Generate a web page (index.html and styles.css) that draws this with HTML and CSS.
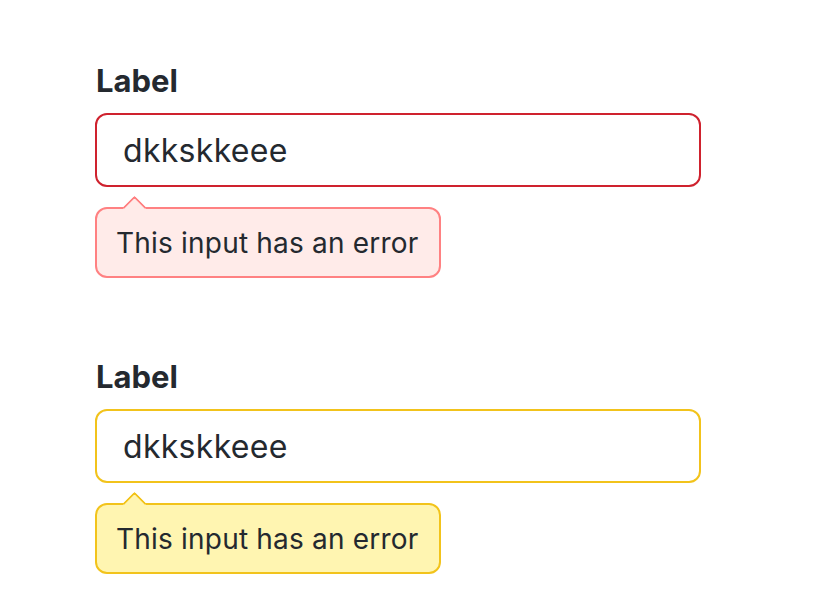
FILE: index.html
```html
<!DOCTYPE html>
<html>
<head>
<meta charset="utf-8">
<link rel="stylesheet" href="styles.css">
</head>
<body>
<div class="page">
  <div class="field field-error">
    <label class="label">Label</label>
    <input class="input" type="text" value="dkkskkeee">
    <div class="validation">This input has an error</div>
  </div>
  <div class="field field-warning">
    <label class="label">Label</label>
    <input class="input" type="text" value="dkkskkeee">
    <div class="validation">This input has an error</div>
  </div>
</div>
</body>
</html>
```
FILE: styles.css
```css
html, body {
  margin: 0;
  padding: 0;
  background: #ffffff;
}
body {
  font-family: Inter, "Noto Sans", "Liberation Sans", sans-serif;
  color: #24292f;
}
.page {
  padding: 61px 0 0 95px;
  display: flex;
  flex-direction: column;
  gap: 79px;
}
.field {
  display: flex;
  flex-direction: column;
  align-items: flex-start;
}
.label {
  font-size: 31px;
  font-weight: 700;
  line-height: 40px;
  height: 40px;
  margin-bottom: 12px;
  padding-left: 1px;
}
.input {
  box-sizing: border-box;
  width: 606px;
  height: 74px;
  margin: 0;
  padding: 0 25px 0 26px;
  border: 2px solid #cf222e;
  border-radius: 12px;
  font-family: inherit;
  font-size: 32px;
  letter-spacing: 0.3px;
  color: #24292f;
  background: #fff;
  outline: none;
}
.validation {
  position: relative;
  box-sizing: border-box;
  margin-top: 20px;
  height: 71px;
  padding: 0 20px 0 19px;
  display: flex;
  align-items: center;
  font-size: 28px;
  letter-spacing: 0.2px;
  border: 2px solid #ff8182;
  border-radius: 12px;
  background: #ffebe9;
}
.validation::before {
  content: "";
  position: absolute;
  top: -10px;
  left: 29px;
  width: 15px;
  height: 15px;
  background: inherit;
  border-top: 2px solid;
  border-left: 2px solid;
  border-color: inherit;
  border-top-left-radius: 3px;
  transform: rotate(45deg);
}
.field-warning .input {
  border-color: #f2c31b;
}
.field-warning .validation {
  border-color: #f2c31b;
  background: #fff5b1;
}
```
